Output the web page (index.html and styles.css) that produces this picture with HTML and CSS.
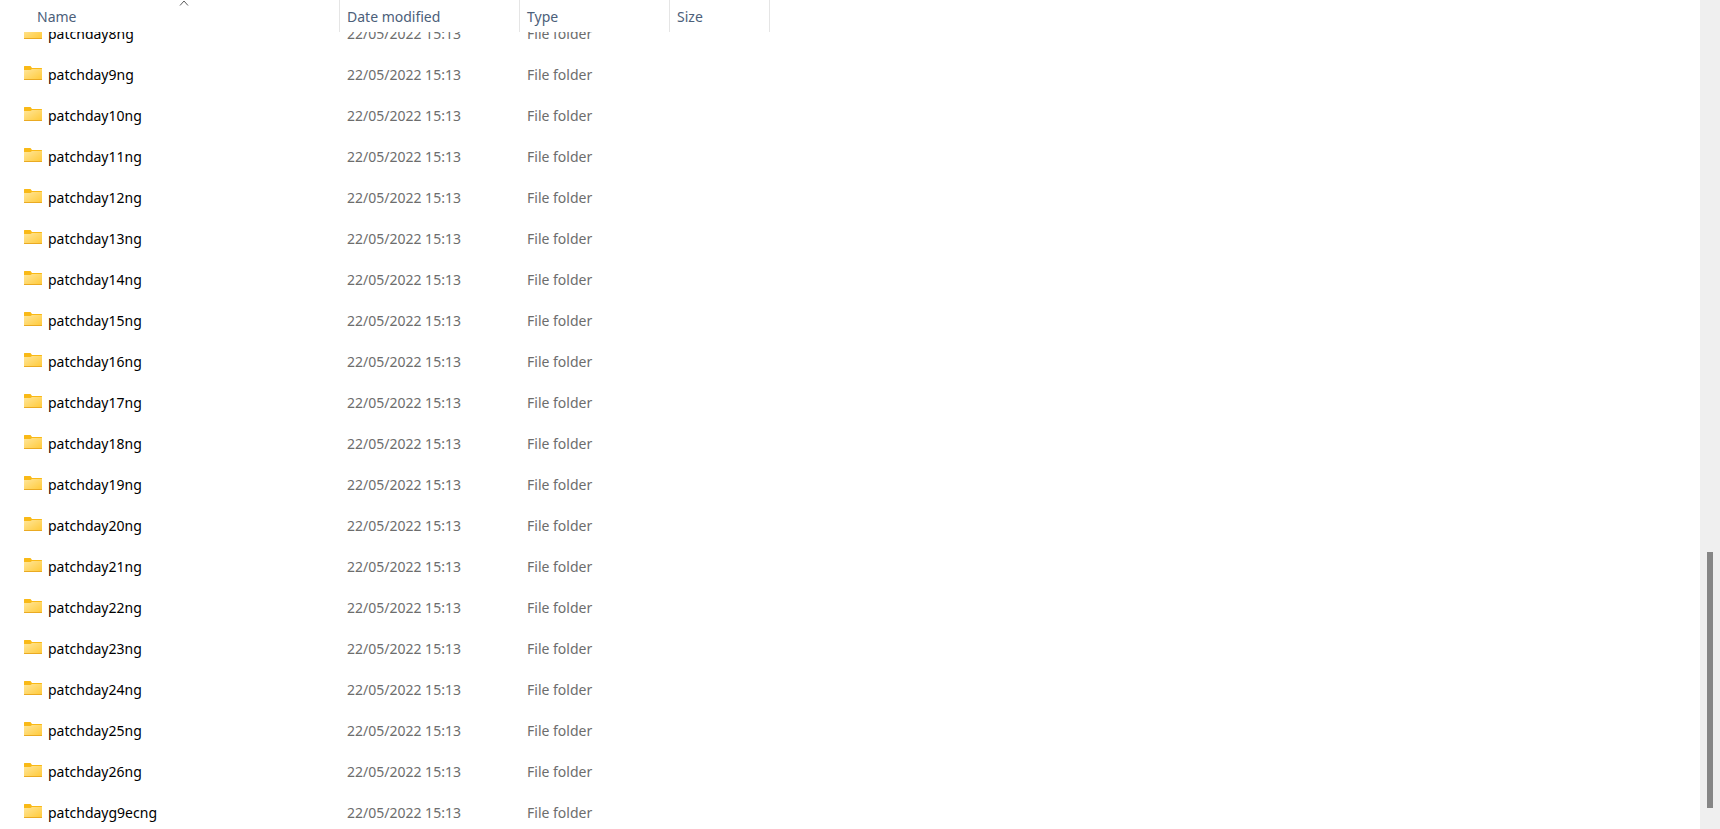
FILE: index.html
```html
<!DOCTYPE html>
<html lang="en">
<head>
    <meta charset="UTF-8">
    <title>dlcpacks</title>
    <link rel="stylesheet" href="styles.css">
</head>
<body>
    <svg class="defs" aria-hidden="true">
        <defs>
            <linearGradient id="folder-front" x1="0" y1="0" x2="1" y2="1">
                <stop offset="0" stop-color="#ffe69a"/>
                <stop offset="1" stop-color="#ffc937"/>
            </linearGradient>
        </defs>
        <symbol id="folder" viewBox="0 0 18 14">
            <path d="M0 0.500a.5.5 0 0 1 .5-.5H6.500l1.500 2H17.500a.5.5 0 0 1 .5.5V6H0z" fill="#f9b916"/>
            <path d="M0 4h6.500l1.500-1H18v10.500a.5.5 0 0 1-.5.5H.5a.5.5 0 0 1-.5-.5z" fill="url(#folder-front)"/>
            <path d="M0 13h18v.5a.5.5 0 0 1-.5.5H.5a.5.5 0 0 1-.5-.5z" fill="#eaaa22"/>
        </symbol>
    </svg>

    <div class="explorer">
        <main class="file-list">
            <table>
                <colgroup>
                    <col class="col-name">
                    <col class="col-date">
                    <col class="col-type">
                    <col class="col-size">
                    <col>
                </colgroup>
                <thead>
                    <tr>
                        <th aria-sort="ascending">
                            <button type="button" class="sort name">Name</button>
                            <svg class="caret" viewBox="0 0 10 6" aria-hidden="true"><path d="M1 5.500L5 1l4 4.500" fill="none" stroke="#5c5c5c"/></svg>
                        </th>
                        <th><button type="button" class="sort">Date modified</button></th>
                        <th><button type="button" class="sort">Type</button></th>
                        <th><button type="button" class="sort">Size</button></th>
                        <td></td>
                    </tr>
                </thead>
                <tbody id="rows"></tbody>
            </table>
        </main>
        <div class="scrollbar">
            <div class="thumb"></div>
        </div>
    </div>

    <script>
        const folders = [];
        for (let i = 8; i <= 26; i++) {
            folders.push(`patchday${i}ng`);
        }
        folders.push('patchdayg9ecng');

        document.getElementById('rows').innerHTML = folders.map(name => `
            <tr>
                <td><div class="file"><svg class="icon" aria-hidden="true"><use href="#folder"/></svg><span>${name}</span></div></td>
                <td>22/05/2022 15:13</td>
                <td>File folder</td>
                <td></td>
                <td></td>
            </tr>`).join('');
    </script>
</body>
</html>
```

FILE: styles.css
```css
body {
    margin: 0;
    background: #fff;
    color: #6d6d6d;
    font-family: "Segoe UI", "Noto Sans", "Open Sans", sans-serif;
    font-size: 14px;
    line-height: 20px;
}
.defs {
    position: absolute;
    width: 0;
    height: 0;
}
.explorer {
    display: flex;
    height: 100vh;
}
.file-list {
    flex: 1;
    overflow: hidden;
}
table {
    width: 100%;
    /* list is scrolled part of a row down */
    margin-top: -19px;
    table-layout: fixed;
    border-collapse: separate;
    border-spacing: 0;
}
.col-name {
    width: 340px;
}
.col-date {
    width: 180px;
}
.col-type {
    width: 150px;
}
.col-size {
    width: 100px;
}
thead th,
thead td {
    position: sticky;
    top: 0;
    height: 32px;
    padding: 0;
    background: #fff;
    font-weight: normal;
}
thead th {
    border-right: 1px solid #e5e5e5;
}
.sort {
    display: block;
    width: 100%;
    height: 32px;
    padding: 2px 7px 0;
    border: 0;
    background: none;
    color: #4c607a;
    font: inherit;
    text-align: left;
}
.sort.name {
    padding-left: 37px;
}
.caret {
    position: absolute;
    top: 0;
    left: 179px;
    width: 10px;
    height: 6px;
}
tbody td {
    height: 41px;
    padding: 0 7px;
    white-space: nowrap;
}
tbody td:first-child {
    padding-left: 24px;
    color: #000;
}
.file {
    display: flex;
    align-items: center;
    gap: 6px;
}
.icon {
    width: 18px;
    height: 14px;
    margin-bottom: 4px;
}
.scrollbar {
    display: flex;
    flex-direction: column;
    justify-content: flex-end;
    width: 20px;
    padding-bottom: 21px;
    box-sizing: border-box;
    background: #efefef;
}
.thumb {
    width: 6px;
    height: 31.7%;
    margin-left: 7px;
    background: #868686;
}
```
